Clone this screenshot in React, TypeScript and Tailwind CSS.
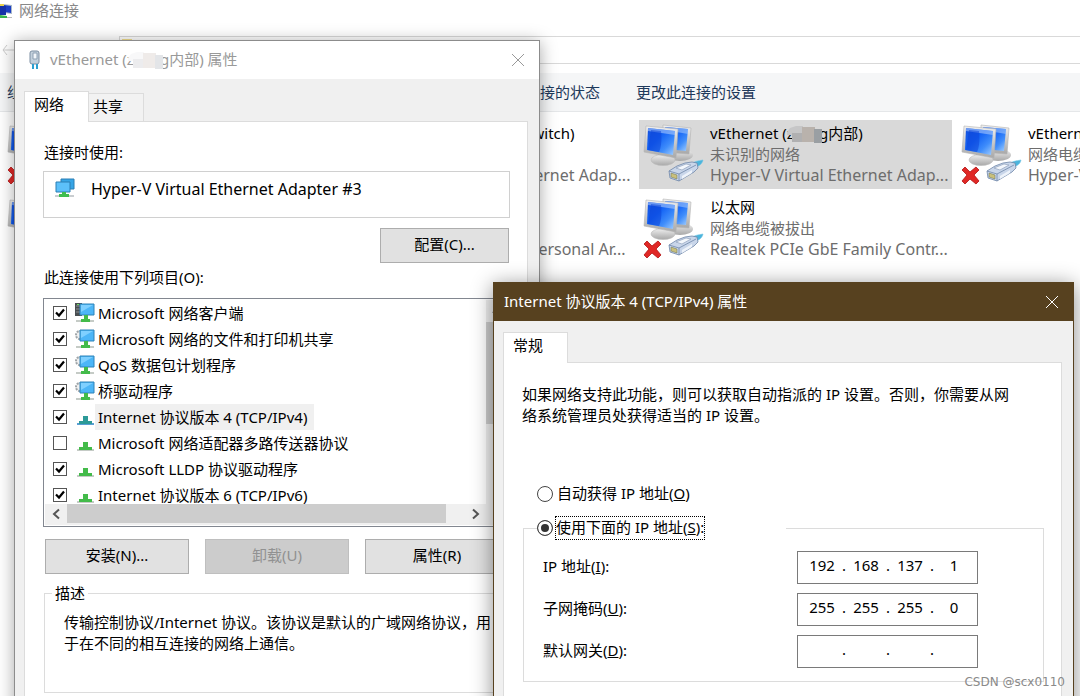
import { Fragment, type ReactNode } from "react";

type Connection = {
  name: ReactNode;
  status: string;
  device: string;
  unplugged?: boolean;
  selected?: boolean;
};

const commands = [
  "禁用此网络设备",
  "诊断这个连接",
  "重命名此连接",
  "查看此连接的状态",
  "更改此连接的设置",
];

const connections: Connection[] = [
  { name: "WLAN", status: "未连接", device: "Wireless", unplugged: true },
  {
    name: "vEthernet (Default Switch)",
    status: "已启用",
    device: "Hyper-V Virtual Ethernet Adap...",
  },
  {
    name: (
      <>
        vEthernet (z
        <Mosaic className="-ml-[7px] -mr-1 h-[18px] w-9" dark />
        g内部)
      </>
    ),
    status: "未识别的网络",
    device: "Hyper-V Virtual Ethernet Adap...",
    selected: true,
  },
  {
    name: "vEthernet (nat)",
    status: "网络电缆被拔出",
    device: "Hyper-V Virtual Ethernet Adap...",
    unplugged: true,
  },
  { name: "本地连接", status: "已启用", device: "TAP" },
  {
    name: "蓝牙网络连接",
    status: "未连接",
    device: "Bluetooth Device (Personal Ar...",
  },
  {
    name: "以太网",
    status: "网络电缆被拔出",
    device: "Realtek PCIe GbE Family Contr...",
    unplugged: true,
  },
];

const items = [
  { label: "Microsoft 网络客户端", icon: "client", checked: true },
  { label: "Microsoft 网络的文件和打印机共享", icon: "service", checked: true },
  { label: "QoS 数据包计划程序", icon: "service", checked: true },
  { label: "桥驱动程序", icon: "service", checked: true },
  {
    label: "Internet 协议版本 4 (TCP/IPv4)",
    icon: "protocol",
    checked: true,
    selected: true,
  },
  { label: "Microsoft 网络适配器多路传送器协议", icon: "protocol", checked: false },
  { label: "Microsoft LLDP 协议驱动程序", icon: "protocol", checked: true },
  { label: "Internet 协议版本 6 (TCP/IPv6)", icon: "protocol", checked: true },
];

const addresses = [
  { id: "ip", label: "IP 地址", hotkey: "I", octets: ["192", "168", "137", "1"] },
  { id: "mask", label: "子网掩码", hotkey: "U", octets: ["255", "255", "255", "0"] },
  { id: "gateway", label: "默认网关", hotkey: "D", octets: ["", "", "", ""] },
];

function Mosaic({ className, dark }: { className: string; dark?: boolean }) {
  const c = dark
    ? ["#c6c6c7", "#b0b0b1", "#b9b2ac", "#9a9fa3"]
    : ["#f8f8f9", "#ececee", "#efebe9", "#e3e5e8"];
  return (
    <svg
      viewBox="0 0 36 18"
      preserveAspectRatio="none"
      className={`relative inline-block align-middle ${className}`}
    >
      <path d="M3 2L9 0h7v9H0V6z" fill={c[0]} />
      <path d="M5 7h11v9H5z" fill={c[1]} />
      <path d="M15 1h13v15H15z" fill={c[2]} />
      <path d="M27 3h8v14h-8z" fill={c[3]} />
    </svg>
  );
}

function CloseIcon() {
  return (
    <svg viewBox="0 0 12 12" className="h-3 w-3" fill="none" stroke="currentColor">
      <path d="M0 0l12 12M12 0L0 12" />
    </svg>
  );
}

function ConnectionIcon({ unplugged }: { unplugged?: boolean }) {
  return (
    <svg viewBox="0 0 68 69" className="h-[69px] w-[68px] shrink-0">
      <defs>
        <linearGradient id="screen" x1="0" y1="0" x2="1" y2="1">
          <stop offset="0" stopColor="#1550dc" />
          <stop offset="0.4" stopColor="#1463f5" />
          <stop offset="0.7" stopColor="#3f8dfb" />
          <stop offset="1" stopColor="#a4d0ff" />
        </linearGradient>
        <linearGradient id="metal" x1="0" y1="0" x2="0" y2="1">
          <stop offset="0" stopColor="#f0f0f0" />
          <stop offset="1" stopColor="#a8a8a8" />
        </linearGradient>
      </defs>
      <ellipse cx="41" cy="35" rx="13" ry="6" fill="url(#metal)" />
      <path d="M24 5l28 3-2 26-26-2z" fill="url(#metal)" stroke="#b4b4b4" strokeWidth="0.6" />
      <path d="M26 7l23 2-2 22-21-2z" fill="url(#screen)" />
      <path d="M26 7l23 2v5L26 10z" fill="#9fc4fb" opacity="0.6" />
      <path d="M19 34h12l2 5H19z" fill="#979797" />
      <ellipse cx="24" cy="40" rx="12" ry="5.500" fill="url(#metal)" stroke="#bcbcbc" strokeWidth="0.6" />
      <path d="M7 6l32 3-2 29L5 32z" fill="url(#metal)" stroke="#b4b4b4" strokeWidth="0.6" />
      <path d="M9 8l27 3-2 24L8 30z" fill="url(#screen)" />
      <path d="M9 8l27 3v4L9 11z" fill="#a9c8fb" opacity="0.6" />
      <path d="M12 10l10 1c1 9 0 17-2 21L9 30z" fill="#0a3fd6" opacity="0.5" />
      <path d="M51 45c4-4 8-4 13-5-1 5-5 6-9 8z" fill="#4bb4dc" stroke="#6fc5e4" strokeWidth="0.6" />
      <path d="M30 51l8-5 8-3 7-1 5 1 1 5-4 4-15 9-9-3z" fill="#c9d6ea" stroke="#6f86a8" strokeWidth="0.8" />
      <path d="M30 51l10 3 17-9M40 54v7" fill="none" stroke="#6f86a8" strokeWidth="0.8" />
      <path d="M37 48l10-4 5 1-9 5z" fill="#f3f7fc" stroke="#8497b4" strokeWidth="0.6" />
      <path d="M43 56l10-6v3l-10 6z" fill="#eef3fa" />
      <path d="M32 53l6 2v4l-6-2z" fill="#c9c07c" stroke="#6d7250" strokeWidth="0.5" />
      {unplugged && (
        <path
          d="M8 47l5 5 6-5 3 3-5 5 5 6-3 3-6-5-5 5-3-3 5-6-5-5z"
          fill="#e02826"
          stroke="#b31414"
          strokeWidth="0.8"
        />
      )}
    </svg>
  );
}

function AdapterIcon() {
  return (
    <svg viewBox="0 0 20 20" className="h-5 w-5 shrink-0">
      <path d="M6 1h13v10H6z" fill="#36a5e6" stroke="#2b7fb4" />
      <path d="M1 4h14v10H1z" fill="#5cc0fa" stroke="#2b7fb4" />
      <path d="M0 17h19v2H0z" fill="#c9cdd0" />
      <path d="M7 14h4v2h3v3H4v-3h3z" fill="#3fbd50" />
    </svg>
  );
}

function ItemIcon({ kind, selected }: { kind: string; selected?: boolean }) {
  if (kind === "protocol") {
    return (
      <svg viewBox="0 0 20 20" className="h-5 w-5 shrink-0">
        <path d="M2 16h17v2H2z" fill={selected ? "#5a9fd4" : "#c5cbc6"} />
        <path
          d="M8 9h5v5h4v3H4v-3h4z"
          fill={selected ? "#2c9a98" : "#43bb4a"}
        />
      </svg>
    );
  }
  return (
    <svg viewBox="0 0 20 20" className="h-5 w-5 shrink-0">
      {kind === "client" ? (
        <>
          <path d="M0 0h7v13H0z" fill="#4a4f52" />
          <path d="M1 3h5M1 6h5M1 9h5" stroke="#8c9194" />
          <path d="M2 1h2v1H2z" fill="#6fe05c" />
        </>
      ) : (
        <circle
          cx="5"
          cy="6"
          r="4"
          fill="#f1f1f1"
          stroke="#9ea4a8"
          strokeWidth="2"
          strokeDasharray="2 1"
        />
      )}
      <path d="M5 1h14v11H5z" fill="#4db6f7" stroke="#2f83b8" />
      <path d="M6 2h12L6 9z" fill="#7fd0ff" />
      <path d="M1 17h18v2H1z" fill="#c5cbc6" />
      <path d="M9 12h4v4h2v3H6v-3h3z" fill="#43bb4a" />
    </svg>
  );
}

function Tab({ children, selected }: { children: ReactNode; selected?: boolean }) {
  return (
    <button
      type="button"
      role="tab"
      aria-selected={!!selected}
      className={
        selected
          ? "relative h-[31px] w-[65px] border border-b-0 border-[#dcdcdc] bg-white pb-1.5 pl-[9px] text-left"
          : "mb-px h-7 w-[55px] border border-b-0 border-l-0 border-[#dcdcdc] bg-[#f2f2f2] pb-0.5 pl-1 text-left"
      }
    >
      {children}
    </button>
  );
}

function PushButton({ children, disabled }: { children: ReactNode; disabled?: boolean }) {
  return (
    <button
      type="button"
      disabled={disabled}
      className="h-[35px] border border-[#adadad] bg-[#e1e1e1] pb-0.5 text-center disabled:border-[#bfbfbf] disabled:bg-[#ccc] disabled:text-[#919191]"
    >
      {children}
    </button>
  );
}

function ConnectionsWindow() {
  return (
    <div className="flex h-full flex-col">
      <div className="flex h-[22px] items-center gap-1.5 text-[#888]">
        <svg viewBox="0 0 13 16" className="h-4 w-[13px]">
          <path d="M3 1l9 1v9l-8-1z" fill="#a9b8c9" />
          <path d="M4 2l7 1v7l-6-1z" fill="#1c3fc4" />
          <path d="M0 2l6 1v9H0z" fill="#1531a8" />
          <path d="M0 1h4v2H0z" fill="#e6cf4e" />
          <path d="M0 12l7 1v2H0z" fill="#35b34c" />
          <path d="M7 14h5v1H7z" fill="#bcbcbc" />
        </svg>
        <h1 className="pb-0.5">网络连接</h1>
      </div>
      <div className="mt-3.5 mb-[9px] flex h-7">
        <button type="button" aria-label="后退" className="w-[119px] pl-0.5 text-[#ccc]">
          <svg viewBox="0 0 16 10" className="h-2.5 w-4" fill="none" stroke="currentColor">
            <path d="M5 0L1 5l4 5M1 5h15" />
          </svg>
        </button>
        <div className="-mr-px grow border border-[#d9d9d9] pt-0.5 pl-0.5">
          <div className="h-4 w-2.5 bg-[#f3df8e]" />
        </div>
      </div>
      <div className="flex h-[39px] shrink-0 items-center gap-9 overflow-hidden border-b border-[#e5e7e9] bg-[#f5f6f7] pl-[7px] whitespace-nowrap text-[#1e395b]">
        <button type="button" className="w-11 text-left">
          组织
        </button>
        {commands.map((c) => (
          <button type="button" key={c}>
            {c}
          </button>
        ))}
      </div>
      <ul className="grid grid-cols-[repeat(4,313px)] gap-[5px] overflow-hidden pt-2 pl-[3px]">
        {connections.map((c, i) => (
          <li
            key={i}
            className={`flex h-[69px] gap-[3px] ${c.selected ? "bg-[#d9d9d9]" : ""}`}
          >
            <ConnectionIcon unplugged={c.unplugged} />
            <div className="pt-[3px] leading-[21px] whitespace-nowrap text-[#6d6d6d]">
              <div className="h-[21px] text-black">{c.name}</div>
              <div>{c.status}</div>
              <div className="text-base leading-[21px]">{c.device}</div>
            </div>
          </li>
        ))}
      </ul>
    </div>
  );
}

function ItemList() {
  return (
    <div className="mt-[11px] grid h-[229px] grid-cols-[1fr_22px] grid-rows-[1fr_21px] border border-[#828790] p-px">
      <ul className="overflow-hidden">
        {items.map((item) => (
          <li key={item.label}>
            <label className="flex h-[26px] items-center pl-2">
              <span className="grid">
                <input
                  type="checkbox"
                  defaultChecked={item.checked}
                  className="peer col-start-1 row-start-1 h-3.5 w-3.5 appearance-none border border-[#555] bg-white"
                />
                <svg
                  viewBox="0 0 14 14"
                  className="col-start-1 row-start-1 hidden h-3.5 w-3.5 peer-checked:block"
                >
                  <path d="M3 6.500L6 9.500 11 3.500" fill="none" stroke="#000" strokeWidth="2.200" />
                </svg>
              </span>
              <span className="ml-2 flex">
                <ItemIcon kind={item.icon} selected={item.selected} />
              </span>
              <span
                className={`flex h-[26px] items-center pr-[7px] pl-[3px] ${
                  item.selected ? "bg-[#f0f0f0]" : ""
                }`}
              >
                {item.label}
              </span>
            </label>
          </li>
        ))}
      </ul>
      <div className="flex flex-col items-center bg-[#f0f0f0]">
        <svg viewBox="0 0 22 22" className="h-[22px] w-[22px]" fill="none" stroke="#606060" strokeWidth="2">
          <path d="M7 13l4-4 4 4" />
        </svg>
        <div className="h-[102px] w-full bg-[#cdcdcd]" />
      </div>
      <div className="flex bg-[#f0f0f0] pb-0.5 text-[#555]">
        <svg viewBox="0 0 22 20" className="h-5 w-[22px]" fill="none" stroke="currentColor" strokeWidth="2">
          <path d="M14 5.500L9 10l5 4.500" />
        </svg>
        <div className="mr-[18px] grow bg-[#cdcdcd]" />
        <svg viewBox="0 0 22 20" className="h-5 w-[22px]" fill="none" stroke="currentColor" strokeWidth="2">
          <path d="M9 5.500l5 4.500-5 4.500" />
        </svg>
      </div>
      <div className="bg-[#f0f0f0]" />
    </div>
  );
}

function AdapterDialog() {
  return (
    <section className="absolute top-10 left-[14px] flex h-[720px] w-[526px] flex-col border border-[#8c8c8c] bg-[#f0f0f0] shadow-[0_2px_16px_rgba(0,0,0,0.35)]">
      <header className="flex h-[38px] items-center bg-white pr-[15px] pl-[14px] text-[#999]">
        <svg viewBox="0 0 12 20" className="h-5 w-3">
          <rect x="1" y="1" width="9" height="13" rx="2" fill="#c3d0dc" stroke="#7c8fa3" />
          <path d="M4 3h4v6H4z" fill="#f2f6fa" stroke="#8da0b3" />
          <path d="M3 14h2v5H3zM7 14h2v5H7z" fill="#2d9fd0" />
        </svg>
        <h2 className="ml-[9px] grow pb-0.5 whitespace-nowrap">
          vEthernet (z
          <Mosaic className="-ml-1.5 -mr-1 h-[18px] w-9" />
          g内部) 属性
        </h2>
        <button type="button" aria-label="关闭">
          <CloseIcon />
        </button>
      </header>
      <div className="flex grow flex-col pt-3 pr-[11px] pb-3 pl-[9px]">
        <div role="tablist" className="-mb-px flex items-end">
          <Tab selected>网络</Tab>
          <Tab>共享</Tab>
        </div>
        <div className="flex grow flex-col border border-[#dcdcdc] bg-white pt-5 pr-[17px] pl-[18px]">
          <p className="pl-px leading-5">连接时使用:</p>
          <div className="mt-[9px] flex h-[47px] border border-[#d0d0d0] pt-1.5 pl-[11px]">
            <AdapterIcon />
            <span className="ml-4 text-base leading-[22px]">
              Hyper-V Virtual Ethernet Adapter #3
            </span>
          </div>
          <div className="mt-2.5 mr-px grid grid-cols-[129px] justify-end">
            <PushButton>配置(C)...</PushButton>
          </div>
          <p className="mt-1 pl-px leading-5">此连接使用下列项目(O):</p>
          <ItemList />
          <div className="mt-3 mr-px ml-0.5 grid grid-cols-3 gap-4">
            <PushButton>安装(N)...</PushButton>
            <PushButton disabled>卸载(U)</PushButton>
            <PushButton>属性(R)</PushButton>
          </div>
          <fieldset className="mt-[9px] ml-px h-[110px] border border-[#dcdcdc] pt-[9px] pr-1 pl-[19px]">
            <legend className="-ml-3 px-[3px] leading-5">描述</legend>
            <p className="leading-[21px]">
              传输控制协议/Internet 协议。该协议是默认的广域网络协议，用于在不同的相互连接的网络上通信。
            </p>
          </fieldset>
        </div>
      </div>
    </section>
  );
}

function Radio({ id, checked }: { id: string; checked?: boolean }) {
  return (
    <input
      type="radio"
      name="mode"
      id={id}
      defaultChecked={checked}
      className="h-4 w-4 shrink-0 appearance-none rounded-full border border-[#444] bg-white checked:bg-[#333] checked:shadow-[inset_0_0_0_3px_#fff]"
    />
  );
}

function Ipv4Dialog() {
  return (
    <section className="absolute top-[282px] left-[493px] flex h-[500px] w-[581px] flex-col border border-[#57411f] bg-[#f0f0f0] shadow-[0_3px_20px_rgba(0,0,0,0.45)]">
      <header className="flex h-[38px] items-center justify-between bg-[#57411f] pr-[15px] pl-2.5 text-white">
        <h2 className="pb-0.5">Internet 协议版本 4 (TCP/IPv4) 属性</h2>
        <button type="button" aria-label="关闭">
          <CloseIcon />
        </button>
      </header>
      <div className="flex grow flex-col pt-[11px] pr-[11px] pb-3 pl-[9px]">
        <div role="tablist" className="-mb-px flex items-end">
          <Tab selected>常规</Tab>
        </div>
        <div className="grow border border-[#dcdcdc] bg-white pt-[21px] pr-[17px] pl-[18px]">
          <p className="pr-7 leading-[21px]">
            如果网络支持此功能，则可以获取自动指派的 IP 设置。否则，你需要从网络系统管理员处获得适当的 IP 设置。
          </p>
          <div className="mt-[57px] flex h-[22px] items-center gap-1 pl-[15px]">
            <Radio id="auto" />
            <label htmlFor="auto" className="pb-0.5">
              自动获得 IP 地址(<u>O</u>)
            </label>
          </div>
          <fieldset className="mt-[11px] ml-px h-[166px] border border-[#dcdcdc] pt-[11px] pr-[65px] pl-[19px]">
            <legend className="-ml-1.5 flex h-6 w-[249px] items-center gap-0.5">
              <Radio id="manual" checked />
              <label
                htmlFor="manual"
                className="border border-dotted border-black pb-0.5 leading-5"
              >
                使用下面的 IP 地址(<u>S</u>):
              </label>
            </legend>
            <div className="flex flex-col gap-[9px]">
              {addresses.map((a) => (
                <div key={a.id} className="flex items-center justify-between">
                  <label htmlFor={a.id} className="pb-0.5">
                    {a.label}(<u>{a.hotkey}</u>):
                  </label>
                  <div className="flex h-[33px] w-[181px] border border-[#7a7a7a] bg-white pl-[5px] leading-[26px]">
                    {a.octets.map((o, i) => (
                      <Fragment key={i}>
                        {i > 0 && <span className="w-1.5 text-center">.</span>}
                        <input
                          id={i === 0 ? a.id : undefined}
                          aria-label={i === 0 ? undefined : `${a.label} ${i + 1}`}
                          defaultValue={o}
                          className="h-[26px] w-[38px] text-center outline-none"
                        />
                      </Fragment>
                    ))}
                  </div>
                </div>
              ))}
            </div>
          </fieldset>
        </div>
      </div>
    </section>
  );
}

function App() {
  return (
    <main className="relative h-screen overflow-hidden bg-white font-['Noto_Sans','Noto_Sans_CJK_SC',sans-serif] text-[15px] text-black">
      <ConnectionsWindow />
      <AdapterDialog />
      <Ipv4Dialog />
      <p className="absolute right-[15px] bottom-1.5 font-['DejaVu_Sans',sans-serif] text-xs leading-4 text-[#8a8a8a]">
        CSDN @scx0110
      </p>
    </main>
  );
}

export default App;
